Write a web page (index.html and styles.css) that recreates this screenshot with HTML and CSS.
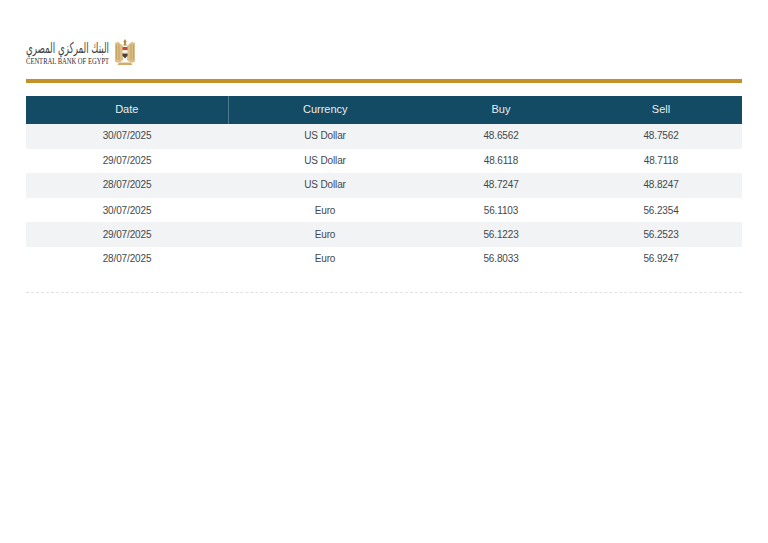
FILE: index.html
```html
<!DOCTYPE html>
<html lang="en">
<head>
<meta charset="utf-8">
<title>Central Bank of Egypt - Exchange Rates</title>
<link rel="stylesheet" href="styles.css">
</head>
<body>
<div class="page">
  <header class="brand">
    <div class="logo">
      <div class="logo-text">
        <div class="logo-ar" dir="rtl" lang="ar">البنك المركزي المصري</div>
        <div class="logo-en">CENTRAL BANK OF EGYPT</div>
      </div>
      <svg class="eagle" viewBox="0 0 22 28" aria-hidden="true">
        <path d="M11 1l1.600 2.600-.8 1.600 1 2.200H9.200l1-2.200-.8-1.600z" fill="#b98a3a"/>
        <path d="M8.600 7.500L3.800 3.600 3 4.500 1 4.800v18.600l2.500 1.300 3-.8 2.600-2V9z" fill="#dcc08a"/>
        <path d="M13.400 7.500l4.800-3.900.8.900 2 .3v18.600l-2.500 1.300-3-.8-2.600-2V9z" fill="#dcc08a"/>
        <path d="M2.600 6.500v15M5 6.500v15.500M19.400 6.500v15M17 6.500v15.500" stroke="#c39a55" stroke-width=".9" fill="none"/>
        <rect x="8.500" y="9" width="5" height="3.200" fill="#c8473a"/>
        <rect x="8.500" y="12.200" width="5" height="3.200" fill="#f5efe2"/>
        <path d="M8.500 15.400h5v2.300L11 20.400l-2.500-2.700z" fill="#4a423a"/>
        <path d="M5 24.600h12l1.500 2.400h-15z" fill="#d3ad6c"/>
      </svg>
    </div>
  </header>
  <div class="rule"></div>
  <table class="rates">
    <colgroup>
      <col class="col-date"><col class="col-currency"><col class="col-buy"><col class="col-sell">
    </colgroup>
    <thead>
      <tr><th class="divided">Date</th><th>Currency</th><th>Buy</th><th>Sell</th></tr>
    </thead>
    <tbody>
      <tr><td>30/07/2025</td><td>US Dollar</td><td>48.6562</td><td>48.7562</td></tr>
      <tr><td>29/07/2025</td><td>US Dollar</td><td>48.6118</td><td>48.7118</td></tr>
      <tr><td>28/07/2025</td><td>US Dollar</td><td>48.7247</td><td>48.8247</td></tr>
      <tr class="row-low"><td>30/07/2025</td><td>Euro</td><td>56.1103</td><td>56.2354</td></tr>
      <tr class="row-mid"><td>29/07/2025</td><td>Euro</td><td>56.1223</td><td>56.2523</td></tr>
      <tr><td>28/07/2025</td><td>Euro</td><td>56.8033</td><td>56.9247</td></tr>
    </tbody>
  </table>
  <div class="end-line"></div>
</div>
</body>
</html>
```
FILE: styles.css
```css
* { box-sizing: border-box; }
html, body { margin: 0; padding: 0; background: #fff; }
body { font-family: "Liberation Sans", Arial, sans-serif; color: #44484c; }
.page { width: 716px; margin-left: 26px; padding-top: 38px; }
.brand { height: 41px; }
.logo { display: flex; align-items: flex-start; gap: 5px; }
.logo-text { width: 83px; }
.logo-ar { font-family: "DejaVu Sans", sans-serif; font-size: 15px; line-height: 20px; height: 20px; color: #444; white-space: nowrap; transform: scaleX(.58); transform-origin: right center; }
.logo-en { font-family: "Liberation Serif", serif; font-size: 8px; line-height: 8px; color: #2c2c2c; white-space: nowrap; transform: scaleX(.82); transform-origin: left center; }
.eagle { width: 22px; height: 28px; display: block; }
.rule { height: 4px; background: #c39129; margin-bottom: 13px; }
.rates { width: 716px; border-collapse: collapse; table-layout: fixed; }
.col-date { width: 202px; }
.col-currency { width: 194px; }
.col-buy { width: 158px; }
.col-sell { width: 162px; }
.rates th { height: 28px; padding: 0 0 2px; background: #134a64; color: #e8eef1; font-size: 11px; font-weight: 400; text-align: center; }
.rates th.divided { border-right: 1px solid #4d7a8f; }
.rates td { height: 24.500px; padding: 0 0 1px; font-size: 10px; letter-spacing: -.14px; text-align: center; color: #44484c; }
.rates tbody tr:nth-child(odd) td { background: #f2f3f5; }
.rates tr.row-low td { padding: 1px 0 0; }
.rates tr.row-mid td { padding: 0; }
.end-line { margin-top: 21px; border-top: 1px dashed #dfe3e3; }
```
